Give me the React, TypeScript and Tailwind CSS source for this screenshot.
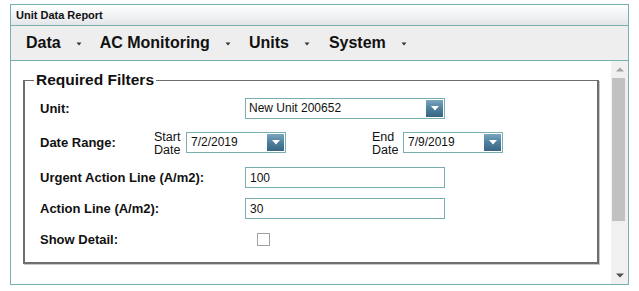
import React from "react";

const TEAL = "border-[#7aafb2]";

function DropBtn() {
  return (
    <div className="w-[17px] h-full flex items-center justify-center bg-gradient-to-b from-[#7aa6c0] via-[#4f7f9d] to-[#386682]">
      <svg width="8" height="5" viewBox="0 0 8 5">
        <path d="M0 0 L8 0 L4 4.5 Z" fill="#ffffff" />
      </svg>
    </div>
  );
}

function MenuCaret() {
  return (
    <svg width="6" height="4" viewBox="0 0 6 4" className="ml-[15px] mt-[2px]">
      <path d="M0.5 0.5 L5.5 0.5 L3 3.5 Z" fill="#333333" />
    </svg>
  );
}

export default function App() {
  const label = "text-[13px] font-bold text-[#111111]";
  return (
    <div
      className="w-[639px] h-[291px] bg-white"
      style={{ fontFamily: '"Liberation Sans", Arial, sans-serif' }}
    >
      <div className="pt-[4px] pl-[10px]">
        <div className={`w-[619px] h-[281px] border ${TEAL} flex flex-col`}>
          {/* title bar */}
          <div className={`h-[21px] border-b ${TEAL} bg-gradient-to-b from-white to-[#e3e6e9] pl-[5px] text-[11px] font-bold leading-[20px] text-[#111111]`}>
            Unit Data Report
          </div>
          {/* menu bar */}
          <div className={`h-[35px] border-b ${TEAL} bg-[#eeeeee] flex items-center pl-[15px] text-[16px] font-bold text-[#111111]`}>
            <div className="flex items-center mr-[18px]">
              <span>Data</span>
              <MenuCaret />
            </div>
            <div className="flex items-center mr-[18px]">
              <span>AC Monitoring</span>
              <MenuCaret />
            </div>
            <div className="flex items-center mr-[19px]">
              <span>Units</span>
              <MenuCaret />
            </div>
            <div className="flex items-center">
              <span>System</span>
              <MenuCaret />
            </div>
          </div>
          {/* content */}
          <div className="flex-1 flex min-h-0">
            <div className="flex-1 bg-white pt-[10px] pl-[12px]">
              <fieldset className="w-[576px] border-t border-l-2 border-r-2 border-b-2 border-[#6e6e6e] shadow-[1px_1px_0_#c8c8c8] pb-[16px]">
                <legend className="ml-[9px] px-[2px] text-[15.5px] font-bold leading-[18px] text-[#111111]">
                  Required Filters
                </legend>
                <div className="pl-[15px]">
                  {/* Unit */}
                  <div className="flex items-center h-[21px] mt-[9px]">
                    <div className={`${label} w-[205px]`}>Unit:</div>
                    <div className={`w-[200px] h-[21px] border ${TEAL} flex items-stretch p-[1px]`}>
                      <div className="flex-1 text-[12px] leading-[17px] pl-[2px] text-[#111111]">New Unit 200652</div>
                      <DropBtn />
                    </div>
                  </div>
                  {/* Date Range */}
                  <div className="flex items-center h-[21px] mt-[13px]">
                    <div className={`${label} w-[114px]`}>Date Range:</div>
                    <div className="w-[32px] text-[12.5px] leading-[13px] text-[#111111] pt-[2px]">
                      Start
                      <br />
                      Date
                    </div>
                    <div className={`w-[100px] h-[21px] border ${TEAL} flex items-stretch p-[1px]`}>
                      <div className="flex-1 text-[12px] leading-[17px] pl-[3px] text-[#111111]">7/2/2019</div>
                      <DropBtn />
                    </div>
                    <div className="w-[31px] ml-[86px] text-[12.5px] leading-[13px] text-[#111111] pt-[2px]">
                      End
                      <br />
                      Date
                    </div>
                    <div className={`w-[100px] h-[21px] border ${TEAL} flex items-stretch p-[1px]`}>
                      <div className="flex-1 text-[12px] leading-[17px] pl-[3px] text-[#111111]">7/9/2019</div>
                      <DropBtn />
                    </div>
                  </div>
                  {/* Urgent */}
                  <div className="flex items-center h-[21px] mt-[14px]">
                    <div className={`${label} w-[205px]`}>Urgent Action Line (A/m2):</div>
                    <div className={`w-[200px] h-[21px] border ${TEAL} text-[12px] leading-[19px] pl-[4px] pt-[1px] text-[#111111]`}>
                      100
                    </div>
                  </div>
                  {/* Action */}
                  <div className="flex items-center h-[21px] mt-[10px]">
                    <div className={`${label} w-[205px]`}>Action Line (A/m2):</div>
                    <div className={`w-[200px] h-[21px] border ${TEAL} text-[12px] leading-[19px] pl-[4px] pt-[1px] text-[#111111]`}>
                      30
                    </div>
                  </div>
                  {/* Show Detail */}
                  <div className="flex items-center h-[13px] mt-[14px]">
                    <div className={`${label} w-[217px]`}>Show Detail:</div>
                    <div className="w-[13px] h-[13px] border border-[#a0a0a0] bg-white" />
                  </div>
                </div>
              </fieldset>
            </div>
            {/* scrollbar */}
            <div className="w-[17px] bg-[#f0f0f0] flex flex-col items-center">
              <div className="h-[17px] w-full flex items-center justify-center">
                <svg width="8" height="5" viewBox="0 0 8 5">
                  <path d="M0 4.5 L8 4.5 L4 0.5 Z" fill="#a3a3a3" />
                </svg>
              </div>
              <div className="w-[13px] h-[143px] bg-[#c1c1c1] -ml-[2px]" />
              <div className="flex-1" />
              <div className="h-[17px] w-full flex items-center justify-center">
                <svg width="8" height="5" viewBox="0 0 8 5">
                  <path d="M0 0.5 L8 0.5 L4 4.5 Z" fill="#505050" />
                </svg>
              </div>
            </div>
          </div>
        </div>
      </div>
    </div>
  );
}
